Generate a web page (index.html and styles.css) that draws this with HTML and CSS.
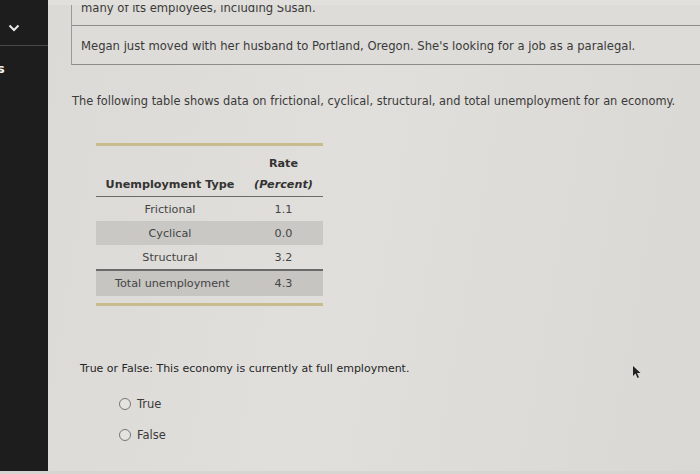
FILE: index.html
```html
<!DOCTYPE html>
<html>
<head>
<meta charset="utf-8">
<link rel="stylesheet" href="styles.css">
</head>
<body>
<div class="screen">
  <aside class="sidebar">
    <div class="side-top">
      <svg class="chev" width="12" height="8" viewBox="0 0 12 8"><path d="M1.5 1.5 L6 6 L10.5 1.5" fill="none" stroke="#e8e8e8" stroke-width="2"/></svg>
    </div>
    <div class="side-item">s</div>
  </aside>
  <main class="main">
    <div class="top-shade"></div>
    <div class="scenarios">
      <div class="scenario clipped">many of its employees, including Susan.</div>
      <div class="scenario">Megan just moved with her husband to Portland, Oregon. She's looking for a job as a paralegal.</div>
    </div>
    <p class="intro">The following table shows data on frictional, cyclical, structural, and total unemployment for an economy.</p>
    <div class="table-wrap">
      <table class="data">
        <thead>
          <tr class="head1"><th></th><th class="rate">Rate</th></tr>
          <tr class="head2"><th>Unemployment Type</th><th><em>(Percent)</em></th></tr>
        </thead>
        <tbody>
          <tr><td>Frictional</td><td>1.1</td></tr>
          <tr class="shade"><td>Cyclical</td><td>0.0</td></tr>
          <tr><td>Structural</td><td>3.2</td></tr>
          <tr class="shade total"><td>Total unemployment</td><td>4.3</td></tr>
        </tbody>
      </table>
    </div>
    <p class="question">True or False: This economy is currently at full employment.</p>
    <div class="options">
      <label class="opt"><span class="radio"></span>True</label>
      <label class="opt"><span class="radio"></span>False</label>
    </div>
    <svg class="cursor" width="10" height="14" viewBox="0 0 10 14"><path d="M1 1 L1 11 L3.5 8.5 L5.5 13 L7 12.3 L5 8 L8.5 8 Z" fill="#222"/></svg>
  </main>
</div>
</body>
</html>
```
FILE: styles.css
```css
html, body {
  margin: 0;
  padding: 0;
  width: 700px;
  height: 474px;
  overflow: hidden;
  background: #d6d5d1;
}
.screen {
  display: flex;
  width: 700px;
  height: 471px;
  font-family: "DejaVu Sans", Verdana, sans-serif;
  color: #3a3a3a;
}
.sidebar {
  width: 48px;
  flex: none;
  background: #1d1d1d;
  display: flex;
  flex-direction: column;
}
.side-top {
  height: 46px;
  border-bottom: 1px solid #4a4a48;
  display: flex;
  align-items: flex-start;
  padding: 24px 0 0 8px;
  box-sizing: border-box;
}
.chev { display: block; }
.side-item {
  color: #f0f0f0;
  font-weight: bold;
  font-size: 13px;
  margin-left: -3px;
  margin-top: 15px;
}
.main {
  flex: 1;
  position: relative;
  background: linear-gradient(100deg, #dbdad6 0%, #e0dfdb 45%, #d9d8d4 100%);
  padding-left: 23px;
}
.top-shade {
  position: absolute;
  left: 0;
  right: 0;
  top: 0;
  height: 5px;
  background: #e1e0dc;
  z-index: 1;
}
.scenarios {
  margin-top: -14px;
  border-left: 1px solid #9a9a98;
  background: #dddcd8;
}
.scenario {
  font-size: 11.6px;
  padding: 0 0 0 9px;
  height: 38px;
  line-height: 40px;
  border-bottom: 1px solid #8c8c8a;
  overflow: hidden;
  white-space: nowrap;
}
.scenario.clipped { height: 39px; line-height: 45px; }
.intro {
  font-size: 11.4px;
  margin: 29px 0 0 1px;
  white-space: nowrap;
}
.table-wrap {
  margin: 35px 0 0 25px;
  width: 227px;
  border-top: 3px solid #c8bc8e;
  border-bottom: 3px solid #c8bc8e;
  padding-bottom: 7px;
}
.data {
  width: 227px;
  border-collapse: collapse;
  font-size: 11.2px;
}
.data th {
  font-weight: bold;
  padding: 0;
  color: #333;
}
.data th:first-child { width: 148px; }
.data .head1 th { height: 24px; vertical-align: bottom; padding-bottom: 3px; }
.data .head2 th { border-bottom: 1.5px solid #6a6a68; height: 23px; vertical-align: middle; }
.data td {
  text-align: center;
  height: 24px;
  padding: 0;
  color: #444;
}
.data tr.shade td { background: #c9c8c4; }
.data tr.total td { border-top: 2px solid #6a6a68; height: 25px; background: #c6c5c1; }
.data tr.total td:first-child { text-align: left; padding-left: 19px; }
.question {
  font-size: 11px;
  margin: 56px 0 0 9px;
  color: #262626;
}
.options {
  display: flex;
  flex-direction: column;
  gap: 17px;
  margin: 22px 0 0 48px;
}
.opt {
  display: flex;
  align-items: center;
  gap: 6px;
  font-size: 11.5px;
  color: #3a3a3a;
}
.radio {
  width: 10px;
  height: 10px;
  border: 1.5px solid #777;
  border-radius: 50%;
  background: #e4e3df;
}
.cursor {
  position: absolute;
  left: 584px;
  top: 365px;
}
```
